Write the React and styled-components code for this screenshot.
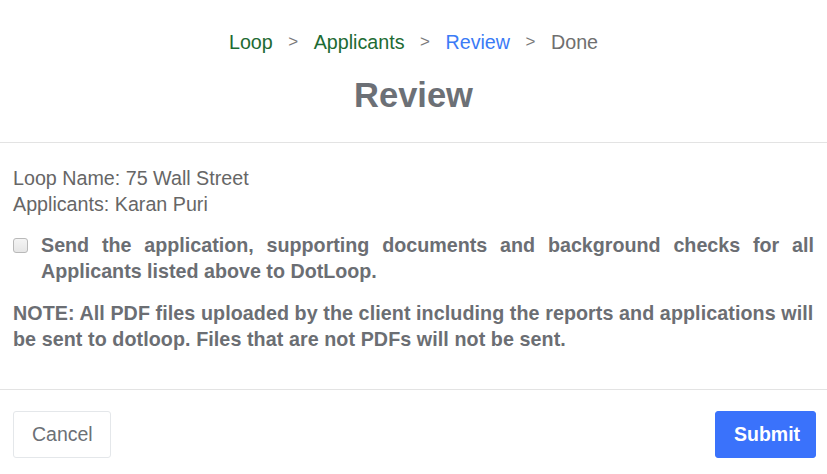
import React, { useState } from 'react'
import styled, { createGlobalStyle } from 'styled-components'

const GlobalStyle = createGlobalStyle`
  html, body {
    margin: 0;
    padding: 0;
    background: #fff;
  }
  body {
    font-family: "Liberation Sans", Arial, sans-serif;
  }
`

const Modal = styled.div`
  width: 827px;
  height: 474px;
  background: #fff;
  display: flex;
  flex-direction: column;
`

const Header = styled.div`
  display: flex;
  flex-direction: column;
  align-items: center;
  padding-top: 29px;
  height: 143px;
  box-sizing: border-box;
  border-bottom: 1px solid #e3e3e3;
`

const Crumbs = styled.div`
  display: flex;
  align-items: center;
  gap: 15.5px;
  font-size: 19.7px;
  line-height: 26px;
`

const Crumb = styled.span`
  color: ${props => props.color};
`

const Sep = styled.span`
  color: #7a7a7a;
  font-size: 17px;
`

const Title = styled.h2`
  margin: 20px 0 0;
  font-size: 34.5px;
  line-height: 40px;
  font-weight: 700;
  color: #6c7076;
`

const Body = styled.div`
  padding: 22px 13px 0;
  height: 247px;
  box-sizing: border-box;
  border-bottom: 1px solid #e3e3e3;
  color: #666;
  font-size: 19.7px;
  line-height: 26px;
`

const Info = styled.div`
  margin-bottom: 15px;
`

const CheckRow = styled.label`
  display: flex;
  align-items: flex-start;
  gap: 13px;
  margin-bottom: 16px;
`

const Box = styled.input`
  appearance: none;
  margin: 6px 0 0;
  width: 15px;
  height: 15px;
  flex: none;
  box-sizing: border-box;
  border: 1px solid #b9b9b9;
  border-radius: 3px;
  background: linear-gradient(#f4f4f4, #e6e6e6);
  cursor: pointer;

  &:checked {
    background: #3a72fb;
    border-color: #3a72fb;
  }
`

const Bold = styled.div`
  font-weight: 700;
  color: #6b6e73;
  text-align: ${props => (props.justify ? 'justify' : 'left')};
  letter-spacing: ${props => (props.justify ? '0' : '0.08px')};
`

const Footer = styled.div`
  display: flex;
  justify-content: space-between;
  align-items: flex-start;
  padding: 21px 11px 0 13px;
`

const Button = styled.button`
  height: 47px;
  padding: 0 18px;
  border-radius: 3px;
  font-family: "Liberation Sans", Arial, sans-serif;
  font-size: 19.5px;
  cursor: pointer;
  border: 1px solid ${props => (props.primary ? '#3a72fb' : '#e4e7ea')};
  background: ${props => (props.primary ? '#3a72fb' : '#fff')};
  color: ${props => (props.primary ? '#fff' : '#6c7076')};
  font-weight: ${props => (props.primary ? 700 : 400)};
  width: ${props => (props.primary ? '101px' : '98px')};
`

const steps = [
  { label: 'Loop', color: '#1d6b33' },
  { label: 'Applicants', color: '#1d6b33' },
  { label: 'Review', color: '#3b7bf6' },
  { label: 'Done', color: '#6f6f6f' },
]

export default function App() {
  const [checked, setChecked] = useState(false)

  return (
    <Modal>
      <GlobalStyle />
      <Header>
        <Crumbs>
          {steps.map((step, i) => (
            <React.Fragment key={step.label}>
              {i > 0 && <Sep>&gt;</Sep>}
              <Crumb color={step.color}>{step.label}</Crumb>
            </React.Fragment>
          ))}
        </Crumbs>
        <Title>Review</Title>
      </Header>
      <Body>
        <Info>
          <div>Loop Name: 75 Wall Street</div>
          <div>Applicants: Karan Puri</div>
        </Info>
        <CheckRow>
          <Box type="checkbox" checked={checked} onChange={e => setChecked(e.target.checked)} />
          <Bold justify>
            Send the application, supporting documents and background checks for all Applicants listed above to DotLoop.
          </Bold>
        </CheckRow>
        <Bold>
          NOTE: All PDF files uploaded by the client including the reports and applications will be sent to dotloop. Files that are not PDFs will not be sent.
        </Bold>
      </Body>
      <Footer>
        <Button>Cancel</Button>
        <Button primary>Submit</Button>
      </Footer>
    </Modal>
  )
}
